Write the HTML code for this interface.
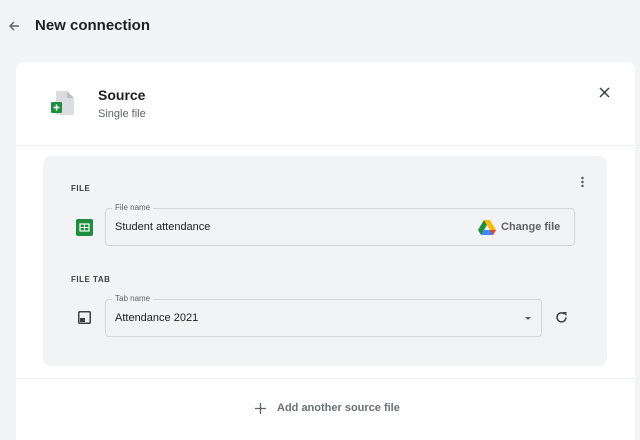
<!DOCTYPE html>
<html><head><style>
*{margin:0;padding:0;box-sizing:border-box}
html,body{width:640px;height:440px;overflow:hidden}
body{background:#f3f4f6;font-family:"Liberation Sans",sans-serif;position:relative;color:#202124}
.abs{position:absolute}
.card{left:16px;top:62px;width:619px;height:400px;background:#fff;border-radius:8px}
.panel{left:43px;top:156px;width:564px;height:210px;background:#f1f3f4;border-radius:8px}
.field{border:1px solid #d5d7da;border-radius:4px;background:#f1f3f4}
.lbl{font-size:8px;color:#5f6368;background:#f1f3f4;padding:0 3px}
.cap{font-size:8px;font-weight:bold;letter-spacing:.5px;color:#3c4043}
</style></head><body>
<svg class="abs" style="left:8px;top:20px" width="12" height="12" viewBox="0 0 12 12"><path d="M11 6H2M6 2L2 6l4 4" stroke="#5f6368" stroke-width="1.4" fill="none"/></svg>
<div class="abs" style="left:35px;top:17px;font-size:15px;font-weight:bold">New connection</div>
<div class="abs card"></div>
<svg class="abs" style="left:51px;top:90px" width="24" height="28" viewBox="0 0 24 28"><path d="M5 1h11l7 7v17H5z" fill="#dadce0"/><path d="M16 1v7h7" fill="#bdc1c6"/><rect x="0" y="12" width="11" height="11" rx="1" fill="#1e8e3e"/><path d="M5.5 14.5v6M2.5 17.5h6" stroke="#fff" stroke-width="1.5"/></svg>
<div class="abs" style="left:98px;top:87px;font-size:14px;font-weight:bold">Source</div>
<div class="abs" style="left:98px;top:108px;font-size:11px;color:#5f6368">Single file</div>
<svg class="abs" style="left:599px;top:87px" width="11" height="11" viewBox="0 0 11 11"><path d="M1 1l9 9M10 1l-9 9" stroke="#3c4043" stroke-width="1.5"/></svg>
<div class="abs" style="left:16px;top:145px;width:619px;height:1px;background:#eceef0"></div>
<div class="abs panel"></div>
<div class="abs cap" style="left:71px;top:184px">FILE</div>
<div class="abs" style="left:581px;top:176px;width:3px;height:11px;background:radial-gradient(circle,#5f6368 1.2px,transparent 1.4px) 0 0/3px 4px"></div>
<svg class="abs" style="left:76px;top:219px" width="17" height="17" viewBox="0 0 17 17"><rect width="17" height="17" rx="2" fill="#1e8e3e"/><rect x="4" y="5" width="9" height="7" fill="none" stroke="#fff" stroke-width="1.2"/><path d="M4 8.5h9M8.5 5v7" stroke="#fff" stroke-width="1"/></svg>
<div class="abs field" style="left:105px;top:208px;width:470px;height:38px"></div>
<div class="abs lbl" style="left:112px;top:203px">File name</div>
<div class="abs" style="left:115px;top:221px;font-size:11px">Student attendance</div>
<svg class="abs" style="left:478px;top:220px" width="18" height="15" viewBox="0 0 18 15"><path d="M6 0h6l-3 5z" fill="#fbbc04"/><path d="M6 0L0 10l3 5 6-10z" fill="#1e8e3e"/><path d="M12 0l6 10h-6L6 0z" fill="#fbbc04"/><path d="M3 15h12l3-5H6z" fill="#4285f4"/><path d="M12 10h6l-3 5z" fill="#ea4335"/></svg>
<div class="abs" style="left:501px;top:221px;font-size:11px;font-weight:bold;color:#5f6368">Change file</div>
<div class="abs cap" style="left:71px;top:275px">FILE TAB</div>
<svg class="abs" style="left:78px;top:311px" width="13" height="13" viewBox="0 0 13 13"><rect x=".75" y=".75" width="11.5" height="11.5" rx="1" fill="none" stroke="#3c4043" stroke-width="1.5"/><rect x="2" y="7" width="5" height="4" fill="#3c4043"/></svg>
<div class="abs field" style="left:105px;top:299px;width:437px;height:38px"></div>
<div class="abs lbl" style="left:112px;top:294px">Tab name</div>
<div class="abs" style="left:115px;top:312px;font-size:11px">Attendance 2021</div>
<div class="abs" style="left:525px;top:317px;border:3px solid transparent;border-top:3px solid #5f6368"></div>
<svg class="abs" style="left:555px;top:311px" width="13" height="13" viewBox="0 0 13 13"><path d="M11 6.5A4.5 4.5 0 1 1 9.5 3" stroke="#3c4043" stroke-width="1.5" fill="none"/><path d="M7.5 1h4v4z" fill="#3c4043"/></svg>
<div class="abs" style="left:16px;top:378px;width:619px;height:1px;background:#eceef0"></div>
<svg class="abs" style="left:255px;top:403px" width="11" height="11" viewBox="0 0 11 11"><path d="M5.5 0v11M0 5.5h11" stroke="#5f6368" stroke-width="1.3"/></svg>
<div class="abs" style="left:277px;top:402px;font-size:11px;font-weight:bold;color:#6b6f74">Add another source file</div>
</body></html>
